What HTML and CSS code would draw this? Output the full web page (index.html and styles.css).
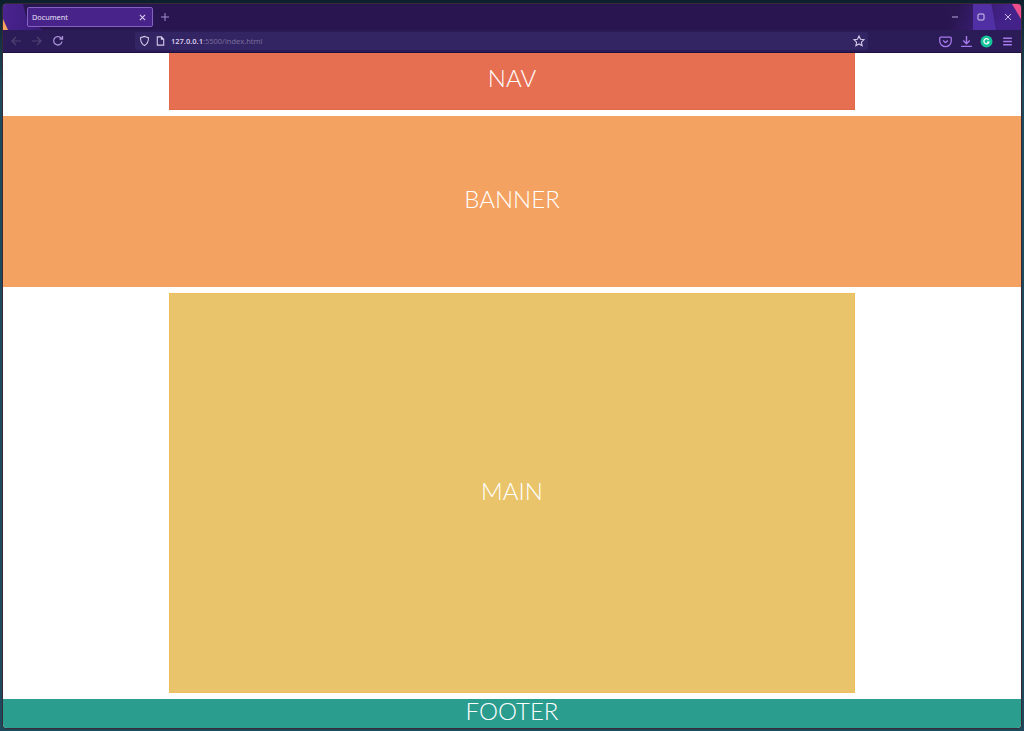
FILE: index.html
```html
<!DOCTYPE html>
<html lang="en">
<head>
<meta charset="utf-8">
<title>Document</title>
<link rel="stylesheet" href="styles.css">
</head>
<body>
<div class="window">
  <header class="titlebar">
    <div class="corner-art"><div class="corner-orange"></div></div>
    <div class="tab">
      <span class="tab-title">Document</span>
      <svg class="tab-close" width="7" height="7" viewBox="0 0 8 8"><path d="M1 1l6 6M7 1L1 7" stroke="#d9cdf0" stroke-width="1.200" fill="none"/></svg>
    </div>
    <svg class="new-tab" width="8" height="8" viewBox="0 0 9 9"><path d="M4.500 0v9M0 4.500h9" stroke="#a78fd6" stroke-width="1.100" fill="none"/></svg>
    <div class="spacer"></div>
    <div class="win-controls">
      <div class="win-art"></div>
      <div class="win-art-active"></div>
      <div class="pink-corner"></div>
      <div class="win-btn"><svg width="8" height="8" viewBox="0 0 8 8"><path d="M1 4h6" stroke="#b9a6dc" stroke-width="1.200"/></svg></div>
      <div class="win-btn"><svg width="8" height="8" viewBox="0 0 8 8"><rect x="1" y="1" width="6" height="6" rx="1" stroke="#d9cdf0" fill="none"/></svg></div>
      <div class="win-btn"><svg width="8" height="8" viewBox="0 0 8 8"><path d="M1 1l6 6M7 1L1 7" stroke="#c9bce6" fill="none"/></svg></div>
    </div>
  </header>
  <div class="toolbar">
    <div class="nav-icons">
      <svg width="14" height="14" viewBox="0 0 14 14"><path d="M12 7H3M7 3L3 7l4 4" stroke="#4f4273" stroke-width="1.200" fill="none"/></svg>
      <svg width="14" height="14" viewBox="0 0 14 14"><path d="M2 7h9M7 3l4 4-4 4" stroke="#4f4273" stroke-width="1.200" fill="none"/></svg>
      <svg width="14" height="14" viewBox="0 0 14 14"><path d="M11 7.500A4.200 4.200 0 1 1 9.600 3.600L11.500 5M11.500 2v3h-3" stroke="#a78fd6" stroke-width="1.300" fill="none"/></svg>
    </div>
    <div class="urlbar">
      <svg width="11" height="12" viewBox="0 0 12 12"><path d="M6 1l4.300 1.300C10.500 6 9.500 9 6 11 2.500 9 1.500 6 1.700 2.300z" stroke="#d5c9ea" stroke-width="1.200" fill="none"/></svg>
      <svg width="11" height="12" viewBox="0 0 12 12"><path d="M2.500 1.500h4.500l2.500 2.500v6.500h-7zM7 1.500V4h2.500" stroke="#d5c9ea" stroke-width="1.200" fill="none"/></svg>
      <span class="url"><span class="url-host">127.0.0.1</span>:5500/index.html</span>
      <span class="spacer"></span>
      <svg width="12" height="12" viewBox="0 0 12 12"><path d="M6 1l1.500 3.300 3.500.4-2.600 2.400.7 3.500L6 8.900l-3.100 1.700.7-3.500L1 4.700l3.500-.4z" stroke="#d5c9ea" stroke-width="1.100" fill="none"/></svg>
    </div>
    <div class="tool-icons">
      <svg width="13" height="13" viewBox="0 0 12 12"><path d="M1.500 2h9a.8.8 0 0 1 .8.800V5.500a5.300 5.300 0 0 1-10.600 0V2.800A.8.8 0 0 1 1.500 2z" stroke="#a678e8" stroke-width="1.200" fill="none"/><path d="M3.800 5L6 7l2.200-2" stroke="#a678e8" stroke-width="1.200" fill="none"/></svg>
      <svg width="13" height="13" viewBox="0 0 12 12"><path d="M6 1v6.500M3 5l3 3 3-3M1 10.500h10" stroke="#a678e8" stroke-width="1.300" fill="none"/></svg>
      <svg width="13" height="13" viewBox="0 0 12 12"><circle cx="6" cy="6" r="5.500" fill="#15c39a"/><path d="M8 4.500A2.400 2.400 0 1 0 8.300 6.500H6.500" stroke="#fff" stroke-width="1.100" fill="none"/></svg>
      <svg width="13" height="13" viewBox="0 0 12 12"><path d="M2 3h8M2 6h8M2 9h8" stroke="#a678e8" stroke-width="1.300" fill="none"/></svg>
    </div>
  </div>
  <main class="page">
    <div class="block nav">NAV</div>
    <div class="block banner">BANNER</div>
    <div class="block main">MAIN</div>
    <div class="block footer">FOOTER</div>
  </main>
</div>
</body>
</html>
```
FILE: styles.css
```css
* { box-sizing: border-box; }
html, body { height: 100%; }
body {
  margin: 0;
  padding: 4px 3px 3px;
  background: linear-gradient(#0d1f2c, #1c4a5c 12%, #1c4a5c);
  font-family: "Lato", "Liberation Sans", sans-serif;
  overflow: hidden;
}
.window {
  height: 724px;
  display: flex;
  flex-direction: column;
  background: #fff;
  border-radius: 4px;
  overflow: hidden;
  box-shadow: 0 0 0 1px #3a2a38;
}
.titlebar {
  position: relative;
  flex: 0 0 26px;
  display: flex;
  align-items: flex-start;
  background: #29154f;
  padding: 3px 0 0 24px;
}
.corner-art {
  position: absolute;
  left: 0; top: 0;
  width: 40px; height: 26px;
  overflow: hidden;
  background: linear-gradient(100deg, #4a2490, #3a1c78);
  clip-path: polygon(0 0, 20px 0, 24px 60%, 40px 100%, 0 100%);
}
.corner-orange {
  width: 5px;
  height: 11px;
  margin-top: 15px;
  background: #f5a35f;
  clip-path: polygon(0 100%, 100% 100%, 0 0);
}
.tab {
  position: relative;
  flex: 0 0 126px;
  height: 20px;
  display: flex;
  align-items: center;
  justify-content: space-between;
  padding: 0 6px 0 4px;
  background: #47238a;
  border: 1px solid #8462c4;
  border-radius: 2px;
}
.tab-title { font-family: "Noto Sans", sans-serif; font-size: 7.3px; color: #e9e2f6; }
.new-tab { margin: 6px 0 0 8px; }
.spacer { flex: 1; }
.win-controls { position: relative; display: flex; height: 26px; margin-top: -3px; }
.win-art {
  position: absolute;
  right: 0; top: 0;
  width: 77px; height: 26px;
  background: linear-gradient(110deg, #2a1650 15%, #43228a 75%);
  clip-path: polygon(0 0, 100% 0, 100% 100%, 6px 100%);
}
.win-art-active {
  position: absolute;
  right: 25px; top: 0;
  width: 23px; height: 26px;
  background: #5030a4;
  clip-path: polygon(0 0, 80% 0, 100% 100%, 0 100%);
}
.win-btn { position: relative; width: 26.500px; display: flex; align-items: center; justify-content: center; }
.pink-corner {
  position: absolute;
  right: 0; top: 0;
  width: 9px; height: 15px;
  background: #ec4f8b;
  clip-path: polygon(0 0, 100% 0, 100% 100%);
}
.toolbar {
  flex: 0 0 23px;
  display: flex;
  align-items: center;
  background: #2b1c58;
  border-bottom: 1px solid #1d0f42;
}
.nav-icons { display: flex; gap: 7px; padding-left: 6px; flex: 0 0 132px; }
.urlbar {
  flex: 0 0 733px;
  height: 18px;
  display: flex;
  align-items: center;
  gap: 5px;
  padding: 0 3px 0 4px;
  background: #332463;
  border-radius: 2px;
}
.url { font-family: "Noto Sans", sans-serif; font-size: 7.500px; color: #7a6d9c; }
.url-host { color: #d5c9ea; font-weight: 600; }
.tool-icons { display: flex; gap: 7.500px; margin-left: 71px; }
.page { flex: 1; display: flex; flex-direction: column; align-items: center; gap: 6px; }
.block {
  display: flex;
  align-items: center;
  justify-content: center;
  color: #fff;
  font-family: "Lato", sans-serif;
  font-weight: 300;
  font-size: 24px;
  line-height: 1;
  padding-bottom: 6px;
}
.nav { width: 686px; flex: 0 0 57px; background: #e76f51; border: 1px solid #e2684a; border-top: 0; }
.banner { width: 100%; flex: 0 0 171px; background: #f4a261; }
.main { width: 686px; flex: 0 0 400px; background: #e9c46a; border: 1px solid #eebf5f; padding-bottom: 4px; }
.footer { width: 100%; flex: 1; background: #2a9d8f; border-bottom: 1px solid #35b3a3; padding-bottom: 5px; }
```
